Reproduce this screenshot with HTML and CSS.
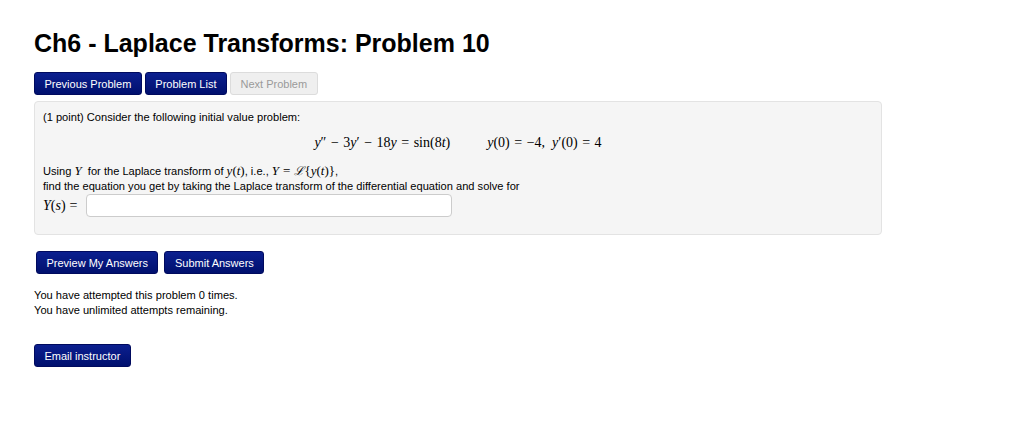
FILE: index.html
```html
<!DOCTYPE html>
<html>
<head>
<meta charset="utf-8">
<link rel="stylesheet" href="styles.css">
</head>
<body>
<div class="page">
  <h1 class="title">Ch6 - Laplace Transforms: Problem 10</h1>
  <div class="nav">
    <a class="btn">Previous Problem</a>
    <a class="btn">Problem List</a>
    <a class="btn btn-disabled">Next Problem</a>
  </div>
  <div class="problem">
    <p class="line">(1 point) Consider the following initial value problem:</p>
    <div class="display">
      <span class="eq"><span class="mi">y</span>″<span class="op">−</span>3<span class="mi">y</span>′<span class="op">−</span>18<span class="mi">y</span><span class="rel">=</span>sin(8<span class="mi">t</span>)</span>
      <span class="eq"><span class="mi">y</span>(0)<span class="rel">=</span>−4,&nbsp; <span class="mi">y</span>′(0)<span class="rel">=</span>4</span>
    </div>
    <p class="line using">Using <span class="math"><span class="mi">Y</span></span>&nbsp; for the Laplace transform of <span class="math"><span class="mi">y</span>(<span class="mi">t</span>)</span>, i.e., <span class="math"><span class="mi">Y</span><span class="rel">=</span><span class="cal">ℒ</span>{<span class="mi">y</span>(<span class="mi">t</span>)}</span>,</p>
    <p class="line">find the equation you get by taking the Laplace transform of the differential equation and solve for</p>
    <div class="answer">
      <span class="math big"><span class="mi">Y</span>(<span class="mi">s</span>)<span class="rel">=</span></span>
      <input class="field" type="text">
    </div>
  </div>
  <div class="submit">
    <a class="btn">Preview My Answers</a>
    <a class="btn">Submit Answers</a>
  </div>
  <p class="info">You have attempted this problem 0 times.<br>You have unlimited attempts remaining.</p>
  <div class="email">
    <a class="btn">Email instructor</a>
  </div>
</div>
</body>
</html>
```
FILE: styles.css
```css
html, body {
  margin: 0;
  padding: 0;
  background: #ffffff;
}
body {
  font-family: "Liberation Sans", Arial, sans-serif;
  font-size: 11.1px;
  color: #000;
}
.page {
  padding-left: 34px;
  width: 848px;
}
.title {
  margin: 28px 0 14px 0;
  font-size: 25px;
  line-height: 30px;
  font-weight: bold;
  color: #000;
}
.nav {
  display: flex;
  gap: 3px;
}
.btn {
  display: inline-flex;
  align-items: center;
  box-sizing: border-box;
  height: 23px;
  padding: 0 9.5px;
  border: 1px solid #000a5e;
  border-radius: 3px;
  background: linear-gradient(#0b1f8f, #00106e);
  color: #fff;
  font-size: 11px;
  white-space: nowrap;
}
.btn-disabled {
  background: #efefef;
  border-color: #dcdcdc;
  color: #9a9a9a;
}
.problem {
  margin-top: 6px;
  box-sizing: border-box;
  height: 134px;
  padding: 8px 8px 0 8px;
  background: #f5f5f5;
  border: 1px solid #e3e3e3;
  border-radius: 4px;
}
.line {
  margin: 0;
  line-height: 15px;
}
.display {
  margin-top: 8px;
  height: 20px;
  line-height: 20px;
  display: flex;
  justify-content: center;
  gap: 37px;
  font-family: "Liberation Serif", "Times New Roman", serif;
  font-size: 14px;
  color: #000;
}
.display .op,
.display .rel {
  padding: 0 4.5px;
}
.math {
  font-family: "Liberation Serif", "Times New Roman", serif;
  font-size: 13px;
  color: #000;
}
.math.big {
  font-size: 14px;
}
.mi {
  font-style: italic;
}
.op {
  padding: 0 4px;
}
.rel {
  padding: 0 4px;
}
.math.big .rel {
  padding: 0 4px;
}
.cal {
  font-family: "DejaVu Serif", serif;
  font-style: italic;
  font-size: 12px;
}
.using {
  margin-top: 10px;
}
.answer {
  display: flex;
  align-items: center;
  gap: 4px;
  margin-top: 0;
}
.field {
  box-sizing: border-box;
  width: 366px;
  height: 23px;
  margin: 0;
  border: 1px solid #cccccc;
  border-radius: 4px;
  background: #fff;
}
.submit {
  display: flex;
  gap: 6px;
  margin: 16px 0 0 2px;
}
.info {
  margin: 14px 0 0 0;
  line-height: 15px;
}
.email {
  display: flex;
  margin-top: 26px;
}
```
